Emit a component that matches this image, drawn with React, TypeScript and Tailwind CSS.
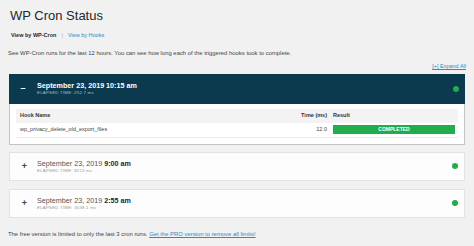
import React from "react";

const font = { fontFamily: '"Liberation Sans", Arial, sans-serif' };

function Dot() {
  return <div className="w-[6px] h-[6px] rounded-full bg-[#1fae4b]" />;
}

function CollapsedCard({ time, elapsed }: { time: string; elapsed: string }) {
  return (
    <div className="mx-[9px] h-[29px] bg-[#fdfdfd] border border-[#e2e2e2] flex items-center pr-[6px]">
      <div className="w-[27px] flex justify-center text-[9px] font-bold text-[#444] leading-none pl-[2px]">+</div>
      <div className="flex-1 flex flex-col gap-[2px]">
        <div className="text-[7.2px] leading-none text-[#555]">
          September 23, 2019 <span className="font-bold text-[#23282d]">{time}</span>
        </div>
        <div className="text-[4.4px] leading-none text-[#999] tracking-[0.2px]">ELAPSED TIME: {elapsed}</div>
      </div>
      <Dot />
    </div>
  );
}

export default function App() {
  return (
    <div style={font} className="w-[474px] h-[246px] bg-[#f1f1f1] overflow-hidden text-[#23282d]">
      <div className="pt-[8px] pl-[10px] text-[13px] leading-[15px] text-[#23282d]">WP Cron Status</div>
      <div className="mt-[10px] pl-[11px] flex items-center text-[5.5px] leading-none gap-[5px]">
        <span className="font-bold text-[#23282d]">View by WP-Cron</span>
        <span className="text-[#aaa]">|</span>
        <span className="text-[#2a8cbf]">View by Hooks</span>
      </div>
      <div className="mt-[12px] pl-[8px] text-[5.9px] leading-none text-[#444]">
        See WP-Cron runs for the last 12 hours. You can see how long each of the triggered hooks took to complete.
      </div>
      <div className="mt-[8px] pr-[8px] flex justify-end text-[5.5px] leading-none text-[#2a8cbf] underline">[+] Expand All</div>
      <div className="mt-[4px] mx-[9px] border border-[#c3c4c7] bg-white">
        <div className="h-[30px] bg-[#0b3a4e] flex items-center pr-[6px] -mx-px -mt-px">
          <div className="w-[28px] flex justify-center text-[9px] font-bold text-white leading-none">–</div>
          <div className="flex-1 flex flex-col gap-[2px]">
            <div className="text-[7.2px] font-bold leading-none text-white">September 23, 2019 10:15 am</div>
            <div className="text-[4.4px] leading-none text-[#a9bfc9] tracking-[0.2px]">ELAPSED TIME: 252.7 ms</div>
          </div>
          <Dot />
        </div>
        <div className="pt-[5px] pb-[6px] px-[6px]">
          <div className="flex items-center h-[14px] bg-[#f3f3f3] text-[5.5px] font-bold leading-none text-[#333]">
            <div className="flex-1 pl-[4px]">Hook Name</div>
            <div className="w-[60px] text-right pr-[5px]">Time (ms)</div>
            <div className="w-[126px] pl-[1px]">Result</div>
          </div>
          <div className="flex items-center h-[15px] border-b border-[#eee] text-[5.5px] leading-none text-[#444]">
            <div className="flex-1 pl-[4px]">wp_privacy_delete_old_export_files</div>
            <div className="w-[60px] text-right pr-[5px]">12.0</div>
            <div className="w-[126px] pl-[1px] pr-[3px]">
              <div className="h-[9px] bg-[#1fae4b] text-white text-[5px] font-bold flex items-center justify-center">COMPLETED</div>
            </div>
          </div>
        </div>
      </div>
      <div className="mt-[7px]">
        <CollapsedCard time="9:00 am" elapsed="8213 ms" />
      </div>
      <div className="mt-[8px]">
        <CollapsedCard time="2:55 am" elapsed="3038.1 ms" />
      </div>
      <div className="mt-[14px] pl-[8px] text-[5.9px] leading-none text-[#444]">
        The free version is limited to only the last 3 cron runs.{" "}
        <span className="text-[#2a8cbf] underline">Get the PRO version to remove all limits!</span>
      </div>
    </div>
  );
}
